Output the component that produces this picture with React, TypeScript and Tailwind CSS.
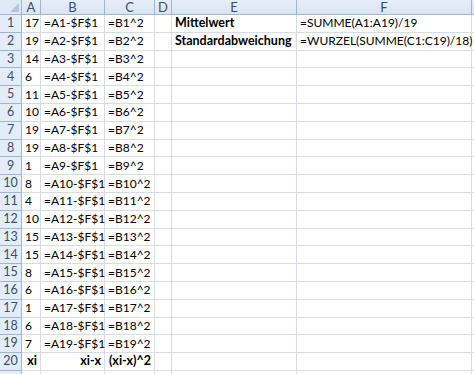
import React from "react";

const cols = ["A", "B", "C", "D", "E", "F", ""];
const values = [17, 19, 14, 6, 11, 10, 19, 19, 1, 8, 4, 10, 15, 15, 8, 6, 1, 6, 7];

type Cell = { text?: string; bold?: boolean; right?: boolean };

function rowCells(r: number): Cell[] {
  if (r === 20) {
    return [
      { text: "xi", bold: true, right: true },
      { text: "xi-x", bold: true, right: true },
      { text: "(xi-x)^2", bold: true, right: true },
      {},
      {},
      {},
      {},
    ];
  }
  if (r === 21) return [{}, {}, {}, {}, {}, {}, {}];
  const e = r === 1 ? "Mittelwert" : r === 2 ? "Standardabweichung" : undefined;
  const f = r === 1 ? "=SUMME(A1:A19)/19" : r === 2 ? "=WURZEL(SUMME(C1:C19)/18)" : undefined;
  return [
    { text: String(values[r - 1]) },
    { text: `=A${r}-$F$1` },
    { text: `=B${r}^2` },
    {},
    { text: e, bold: true },
    { text: f },
    {},
  ];
}

export default function App() {
  const rows = Array.from({ length: 21 }, (_, i) => i + 1);
  return (
    <div
      className="w-[474px] h-[374px] overflow-hidden bg-white text-[12px] text-black"
      style={{ fontFamily: "Lato, 'Open Sans', sans-serif" }}
    >
      <div className="grid grid-cols-[22px_19px_64px_50px_17px_125px_175px_20px] auto-rows-[17.8px] grid-rows-[15px]">
        <div className="relative border-r border-b border-[#9eb6ce] bg-[#dfe8f5]">
          <div className="absolute right-[2px] bottom-[2px] w-0 h-0 border-l-[9px] border-l-transparent border-b-[9px] border-b-[#b7c4d6]" />
        </div>
        {cols.map((c, i) => (
          <div
            key={i}
            className="flex items-center justify-center border-r border-b border-[#9eb6ce] bg-gradient-to-b from-[#e6eef9] to-[#d9e4f3] text-[13px] leading-none text-[#3c4f66]"
          >
            {c}
          </div>
        ))}
        {rows.map((r) => (
          <React.Fragment key={r}>
            <div className="flex items-center justify-center border-r border-b border-[#9eb6ce] bg-[#e4ecf7] text-[12.5px] leading-none text-[#3c4f66]">
              {r < 21 ? r : ""}
            </div>
            {rowCells(r).map((cell, j) => (
              <div
                key={j}
                className={`flex items-center overflow-visible whitespace-nowrap border-r border-b border-[#d6dbe4] px-[3px] leading-none ${
                  cell.right ? "justify-end" : "justify-start"
                } ${cell.bold ? "font-bold text-[12.5px]" : ""}`}
              >
                {cell.text}
              </div>
            ))}
          </React.Fragment>
        ))}
      </div>
    </div>
  );
}
